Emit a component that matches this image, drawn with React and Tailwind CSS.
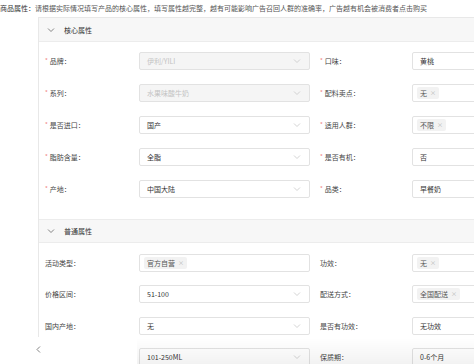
import React from "react";

const Chevron = ({ className = "" }) => (
  <svg width="8" height="6" viewBox="0 0 8 6" className={className}>
    <polyline points="1,1.5 4,4.5 7,1.5" fill="none" stroke="currentColor" strokeWidth="0.8" />
  </svg>
);

const Tag = ({ children }) => (
  <span className="inline-flex items-center h-[12px] px-[3px] gap-[3px] bg-[#f2f2f2] rounded-[2px] text-[#555]">
    {children}
    <span className="text-[#b5b5b5] text-[6px]">×</span>
  </span>
);

const Field = ({ value, tags, disabled, chevron, className = "" }) => (
  <div
    className={`flex items-center justify-between h-[18px] w-[171px] shrink-0 border border-[#e2e2e2] rounded-[2px] pl-[7px] pr-[8px] ${
      disabled ? "bg-[#f5f5f5] text-[#c3c3c3]" : "bg-white text-[#333]"
    } ${className}`}
  >
    <div className="flex items-center gap-[3px] -ml-[3px]">
      {tags ? tags.map((t) => <Tag key={t}>{t}</Tag>) : <span className="ml-[3px]">{value}</span>}
    </div>
    {chevron && <Chevron className="text-[#c8c8c8]" />}
  </div>
);

const Label = ({ text, required, className = "" }) => (
  <div className={`flex items-center text-[#444] ${className}`}>
    {required && <span className="text-[#f08080] text-[6px] mr-[2px]">*</span>}
    <span>{text}：</span>
  </div>
);

const Row = ({ h, left, right }) => (
  <div className={`flex items-center ${h}`}>
    <Label text={left.label} required={left.required} className="w-[100px] shrink-0 pl-[6px]" />
    <Field {...left} />
    <Label text={right.label} required={right.required} className="w-[92px] shrink-0 ml-[10px]" />
    <Field {...right} />
  </div>
);

const Header = ({ title, top }) => (
  <div
    className={`flex items-center h-[24px] bg-[#f7f7f7] border-b border-[#ececec] ${top ? "border-t" : ""} pl-[8px] gap-[9px] text-[#333]`}
  >
    <Chevron className="text-[#666]" />
    <span>{title}</span>
  </div>
);

export default function App() {
  const sec1 = [
    [
      { label: "品牌", required: true, value: "伊利/YILI", disabled: true, chevron: true },
      { label: "口味", required: true, value: "黄桃" },
    ],
    [
      { label: "系列", required: true, value: "水果味酸牛奶", disabled: true, chevron: true },
      { label: "配料卖点", required: true, tags: ["无"] },
    ],
    [
      { label: "是否进口", required: true, value: "国产", chevron: true },
      { label: "适用人群", required: true, tags: ["不限"] },
    ],
    [
      { label: "脂肪含量", required: true, value: "全脂", chevron: true },
      { label: "是否有机", required: true, value: "否" },
    ],
    [
      { label: "产地", required: true, value: "中国大陆", chevron: true },
      { label: "品类", required: true, value: "早餐奶" },
    ],
  ];
  const sec2 = [
    [
      { label: "活动类型", tags: ["官方自营"] },
      { label: "功效", tags: ["无"] },
    ],
    [
      { label: "价格区间", value: "51-100", chevron: true },
      { label: "配送方式", tags: ["全国配送"] },
    ],
    [
      { label: "国内产地", value: "无", chevron: true },
      { label: "是否有功效", value: "无功效" },
    ],
    [
      { label: "容量", value: "101-250ML", chevron: true },
      { label: "保质期", value: "0-6个月" },
    ],
  ];

  return (
    <div className="relative w-[474px] h-[364px] overflow-hidden bg-white text-[7px] leading-[10px] font-['Noto_Sans_CJK_SC',sans-serif]">
      <div className="h-[17px] pt-[3px] whitespace-nowrap text-[#555]">
        <span className="text-[#333]">商品属性：</span>
        请根据实际情况填写产品的核心属性，填写属性越完整，越有可能影响广告召回人群的准确率，广告越有机会被消费者点击购买
      </div>
      <div className="ml-[38px] w-[620px] border-l border-t border-[#e8e8e8]">
        <Header title="核心属性" />
        <div className="pt-[3px] pb-[14px]">
          {sec1.map(([l, r], i) => (
            <Row key={i} h="h-[32px]" left={l} right={r} />
          ))}
        </div>
        <Header title="普通属性" top />
        <div className="pt-[4px]">
          {sec2.map(([l, r], i) => (
            <Row key={i} h="h-[31.5px]" left={l} right={r} />
          ))}
        </div>
      </div>
      <div className="absolute left-0 top-[337px] w-[137px] h-[27px] bg-white flex items-center pl-[36px] pb-[2px]">
        <svg width="5" height="7" viewBox="0 0 5 7">
          <polyline points="4,0.5 1,3.5 4,6.5" fill="none" stroke="#666" strokeWidth="0.8" />
        </svg>
      </div>
      <div className="absolute left-[137px] top-[338px] w-[337px] h-[26px] bg-gradient-to-b from-transparent to-[rgba(0,0,0,0.05)] pointer-events-none" />
    </div>
  );
}
